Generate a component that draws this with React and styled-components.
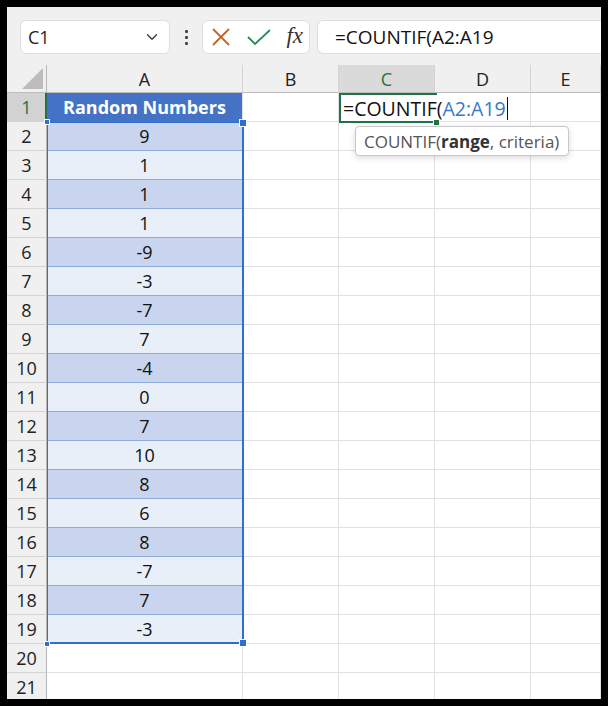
import styled, { createGlobalStyle } from 'styled-components';
import { ChevronDown } from 'lucide-react';

const GlobalStyle = createGlobalStyle`
  html, body {
    margin: 0;
    padding: 0;
    background: #000;
  }
  * { box-sizing: border-box; }
`;

const Frame = styled.div`
  width: 608px;
  height: 706px;
  padding: 7px 7px 7px 7px;
  background: #000;
`;

const Window = styled.div`
  width: 594px;
  height: 692px;
  background: #fff;
  overflow: hidden;
  font-family: 'Open Sans', 'Noto Sans', sans-serif;
  color: #222;
`;

const Toolbar = styled.div`
  height: 58px;
  background: #f0f0f0;
  display: flex;
  align-items: flex-start;
  padding: 13px 0 0 13px;
  overflow: hidden;
`;

const Box = styled.div`
  height: 34px;
  background: #fff;
  border: 1px solid #dedede;
  border-radius: 6px;
  display: flex;
  align-items: center;
  flex-shrink: 0;
`;

const NameBox = styled(Box)`
  width: 150px;
  padding: 0 8px 0 7px;
  justify-content: space-between;
  font-size: 18px;
  color: #1f1f1f;
`;

const Dots = styled.div`
  width: 32px;
  height: 34px;
  flex-shrink: 0;
  display: flex;
  flex-direction: column;
  align-items: center;
  justify-content: center;
  gap: 3px;
  & > span {
    width: 3px;
    height: 3px;
    border-radius: 1px;
    background: #444;
  }
`;

const FxBox = styled(Box)`
  width: 108px;
  padding: 0 6px 0 8px;
  justify-content: space-between;
`;

const Fx = styled.span`
  font-family: 'Liberation Serif', 'DejaVu Serif', serif;
  font-style: italic;
  font-size: 23px;
  color: #333;
  margin-top: -3px;
`;

const FormulaBar = styled(Box)`
  margin-left: 7px;
  width: 320px;
  padding-left: 17px;
  font-size: 19px;
  color: #111;
  border-right: none;
  border-radius: 6px 0 0 6px;
`;

const GridWrap = styled.div`
  position: relative;
`;

const Grid = styled.div`
  display: grid;
  grid-template-columns: 40px 196px 96px 96px 96px 1fr;
  grid-auto-rows: 29px;
  grid-template-rows: 28px;
`;

const Cell = styled.div`
  border-right: 1px solid #e1e1e1;
  border-bottom: 1px solid ${(p) => (p.band ? '#8eaadb' : '#e1e1e1')};
  background: ${(p) => (p.band === 'dark' ? '#c9d5ee' : p.band === 'light' ? '#e9eff8' : '#fff')};
  display: flex;
  align-items: center;
  justify-content: center;
  font-size: 18px;
  color: #111;
  white-space: nowrap;
`;

const TitleCell = styled(Cell)`
  background: #4472c4;
  color: #fff;
  font-weight: 700;
  border-bottom-color: #4472c4;
`;

const ColHead = styled.div`
  background: ${(p) => (p.active ? '#dadada' : '#f0f0f0')};
  color: ${(p) => (p.active ? '#217346' : '#222')};
  border-right: 1px solid #d4d4d4;
  border-bottom: 1px solid #bdbdbd;
  display: flex;
  align-items: center;
  justify-content: center;
  font-size: 18px;
`;

const RowHead = styled.div`
  background: ${(p) => (p.active ? '#d2d2d2' : '#f0f0f0')};
  color: ${(p) => (p.active ? '#217346' : '#222')};
  border-right: ${(p) => (p.active ? '2px solid #217346' : '1px solid #b5b5b5')};
  border-bottom: 1px solid #d4d4d4;
  display: flex;
  align-items: center;
  justify-content: center;
  font-size: 18px;
  padding-left: ${(p) => (p.active ? '1px' : '0')};
`;

const Corner = styled.div`
  background: #f0f0f0;
  border-right: 1px solid #b5b5b5;
  border-bottom: 1px solid #bdbdbd;
  position: relative;
  &::after {
    content: '';
    position: absolute;
    right: 3px;
    bottom: 3px;
    width: 21px;
    height: 21px;
    background: #bcbcbc;
    clip-path: polygon(100% 0, 100% 100%, 0 100%);
  }
`;

const RangeBox = styled.div`
  position: absolute;
  left: 40px;
  top: 57px;
  width: 197px;
  height: 522px;
  border-left: 1px solid #2f6fcf;
  border-right: 2px solid #2f6fcf;
  border-bottom: 2px solid #2f6fcf;
  border-top: 1px solid #2f6fcf;
  pointer-events: none;
`;

const Handle = styled.span`
  position: absolute;
  width: ${(p) => (p.big ? 6 : 4)}px;
  height: ${(p) => (p.big ? 6 : 4)}px;
  background: #2f6fcf;
  outline: 1px solid #fff;
  ${(p) => (p.right ? 'right: -4px;' : 'left: -3px;')}
  ${(p) => (p.bottom ? 'bottom: -4px;' : 'top: -3px;')}
`;

const Editor = styled.div`
  position: absolute;
  left: 332px;
  top: 28px;
  width: 98px;
  height: 30px;
  border: 2px solid #217346;
  background: #fff;
  display: flex;
  align-items: center;
  padding-left: 2px;
  font-size: 19.5px;
  white-space: nowrap;
  color: #111;
  &::after {
    content: '';
    position: absolute;
    right: -4px;
    bottom: -4px;
    width: 5px;
    height: 5px;
    background: #217346;
    outline: 1px solid #fff;
  }
`;

const EditText = styled.div`
  display: flex;
  align-items: center;
  background: #fff;
  height: 26px;
  padding-right: 2px;
`;

const Ref = styled.span`
  color: #3a78c9;
`;

const Caret = styled.span`
  display: inline-block;
  width: 1px;
  height: 23px;
  background: #111;
  margin-left: 1px;
`;

const Tooltip = styled.div`
  position: absolute;
  left: 348px;
  top: 61px;
  width: 214px;
  height: 30px;
  padding: 0 8px;
  background: #fff;
  border: 1px solid #c8c8c8;
  border-radius: 4px;
  box-shadow: 0 2px 6px rgba(0, 0, 0, 0.15);
  display: flex;
  align-items: center;
  font-size: 17px;
  color: #555;
  white-space: nowrap;
  & > b {
    color: #333;
  }
`;

const numbers = [9, 1, 1, 1, -9, -3, -7, 7, -4, 0, 7, 10, 8, 6, 8, -7, 7, -3];
const cols = ['A', 'B', 'C', 'D', 'E'];

const App = () => {
  const rows = [];
  for (let r = 1; r <= 21; r++) {
    const n = numbers[r - 2];
    rows.push(
      <RowHead key={`h${r}`} active={r === 1}>
        {r}
      </RowHead>
    );
    if (r === 1) {
      rows.push(<TitleCell key={`a${r}`}>Random Numbers</TitleCell>);
    } else if (n !== undefined) {
      rows.push(
        <Cell key={`a${r}`} band={r % 2 === 0 ? 'dark' : 'light'}>
          {n}
        </Cell>
      );
    } else {
      rows.push(<Cell key={`a${r}`} />);
    }
    for (let c = 1; c < cols.length; c++) {
      rows.push(<Cell key={`${cols[c]}${r}`} />);
    }
  }

  return (
    <Frame>
      <GlobalStyle />
      <Window>
        <Toolbar>
          <NameBox>
            <span>C1</span>
            <ChevronDown size={18} strokeWidth={1.6} color="#333" />
          </NameBox>
          <Dots>
            <span />
            <span />
            <span />
          </Dots>
          <FxBox>
            <svg width="20" height="20" viewBox="0 0 20 20">
              <path d="M2 2 L18 18 M18 2 L2 18" stroke="#c0652b" strokeWidth="1.8" fill="none" />
            </svg>
            <svg width="26" height="20" viewBox="0 0 26 20">
              <path d="M2 10 L9 17 L24 3" stroke="#2e8b57" strokeWidth="1.8" fill="none" />
            </svg>
            <Fx>fx</Fx>
          </FxBox>
          <FormulaBar>=COUNTIF(A2:A19</FormulaBar>
        </Toolbar>
        <GridWrap>
          <Grid>
            <Corner />
            {cols.map((c) => (
              <ColHead key={c} active={c === 'C'}>
                {c}
              </ColHead>
            ))}
            {rows}
          </Grid>
          <RangeBox>
            <Handle />
            <Handle right big />
            <Handle bottom />
            <Handle right bottom big />
          </RangeBox>
          <Editor>
            <EditText>
              =COUNTIF(<Ref>A2:A19</Ref>
              <Caret />
            </EditText>
          </Editor>
          <Tooltip>
            COUNTIF(<b>range</b>, criteria)
          </Tooltip>
        </GridWrap>
      </Window>
    </Frame>
  );
};

export default App;
